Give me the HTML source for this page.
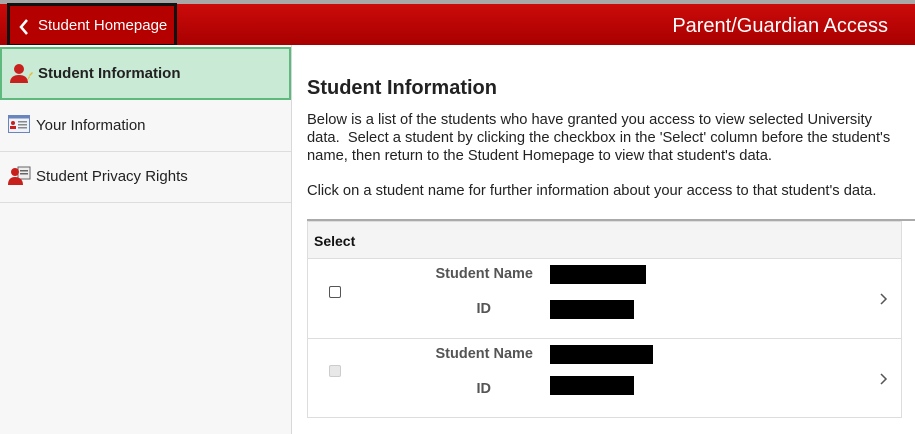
<!DOCTYPE html>
<html><head><meta charset="utf-8"><style>
*{box-sizing:border-box;margin:0;padding:0}
body{width:915px;height:434px;overflow:hidden;background:#fff;font-family:"Liberation Sans",Arial,sans-serif;position:relative}
.top{position:absolute;left:0;top:0;width:915px;height:4px;background:#a8a8a8}
.hdr{position:absolute;left:0;top:4px;width:915px;height:41px;background:linear-gradient(#cc0a0a,#a80000)}
.back{position:absolute;left:7px;top:3px;width:170px;height:44px;border:3px solid #111;background:#b50000;color:#fff;font-size:15px;line-height:40px;padding-left:28px}
.back svg{position:absolute;left:9px;top:13px}
.ttl{position:absolute;right:27px;top:10px;line-height:33px;color:#fff;font-size:20px}
.nav{position:absolute;left:0;top:45px;width:292px;height:389px;background:#f7f7f7;border-right:1px solid #d8d8d8}
.it{position:absolute;left:0;width:291px;height:51px;border-bottom:1px solid #ddd;font-size:15px;color:#222;padding-left:36px;line-height:50px}
.sel{background:#c9ebd6;border:2px solid #5db97c;font-weight:bold;padding-left:36px}
.it svg{position:absolute;left:8px;top:14px}
h1{position:absolute;left:307px;top:77px;font-size:20px;font-weight:bold;color:#222}
.p{position:absolute;left:307px;width:595px;font-size:14.7px;line-height:18px;color:#222}
.ln{position:absolute;left:307px;top:219px;width:608px;height:2px;background:#aaa}
.tb{position:absolute;left:307px;top:221px;width:595px;height:197px;border:1px solid #ddd}
.th{height:37px;background:#f4f4f4;border-bottom:1px solid #ddd;font-weight:bold;font-size:14px;line-height:38px;padding-left:6px;color:#111}
.row{position:relative;height:80px;border-bottom:1px solid #ddd}
.lb{position:absolute;font-weight:bold;font-size:14.5px;color:#555;text-align:right;width:120px}
.blk{position:absolute;background:#000;height:19px}
.cb{position:absolute;left:21px;width:12px;height:12px;border:1px solid #555;border-radius:2px}
.chev{position:absolute;left:572px}
</style></head><body>
<div class="top"></div>
<div class="hdr"></div>
<div class="back"><svg width="10" height="16" viewBox="0 0 10 16"><path d="M8 1L2 8l6 7" stroke="#fff" stroke-width="2.5" fill="none"/></svg>Student Homepage</div>
<div class="ttl">Parent/Guardian Access</div>
<div class="nav">
<div class="it sel" style="top:2px;height:53px;line-height:50px"><svg width="24" height="22" viewBox="0 0 24 22"><circle cx="9" cy="6" r="5" fill="#c8201d"/><path d="M0 20c0-6 4-8 9-8s9 2 9 8z" fill="#c8201d"/><path d="M19 12l3-3 1 1-3 3z M17 18l2-5 1 1z" fill="#e8b830"/></svg>Student Information</div>
<div class="it" style="top:56px"><svg width="22" height="18" viewBox="0 0 22 18"><rect x="0.5" y="0.5" width="21" height="17" fill="#eef2fa" stroke="#6a85bb"/><rect x="0.5" y="0.5" width="21" height="3" fill="#6a85bb"/><circle cx="5" cy="8" r="2" fill="#c8201d"/><rect x="2" y="11" width="6" height="3" fill="#c8201d"/><rect x="10" y="6" width="9" height="1.5" fill="#888"/><rect x="10" y="9" width="9" height="1.5" fill="#888"/><rect x="10" y="12" width="9" height="1.5" fill="#888"/></svg>Your Information</div>
<div class="it" style="top:107px"><svg width="24" height="20" viewBox="0 0 24 20"><rect x="10" y="1" width="12" height="12" fill="#eee" stroke="#666"/><rect x="12" y="4" width="8" height="1.5" fill="#666"/><rect x="12" y="7" width="8" height="1.5" fill="#666"/><circle cx="7" cy="6" r="4" fill="#c8201d"/><path d="M0 19c0-6 3-8 7-8s8 2 8 8z" fill="#c8201d"/></svg>Student Privacy Rights</div>
</div>
<h1>Student Information</h1>
<div class="p" style="top:111px">Below is a list of the students who have granted you access to view selected University data.&nbsp; Select a student by clicking the checkbox in the 'Select' column before the student's name, then return to the Student Homepage to view that student's data.</div>
<div class="p" style="top:182px">Click on a student name for further information about your access to that student's data.</div>
<div class="ln"></div>
<div class="tb">
<div class="th">Select</div>
<div class="row">
<div class="cb" style="top:27px"></div>
<div class="lb" style="left:105px;top:7px">Student Name</div>
<div class="blk" style="left:242px;top:6px;width:96px"></div>
<div class="lb" style="left:63px;top:42px">ID</div>
<div class="blk" style="left:242px;top:41px;width:84px"></div>
<svg class="chev" style="top:34px" width="8" height="12" viewBox="0 0 8 12"><path d="M1 1l5 5-5 5" stroke="#555" stroke-width="1.5" fill="none"/></svg>
</div>
<div class="row" style="border-bottom:none">
<div class="cb" style="top:26px;border-color:#ccc;background:#e8e8e8"></div>
<div class="lb" style="left:105px;top:7px">Student Name</div>
<div class="blk" style="left:242px;top:6px;width:103px"></div>
<div class="lb" style="left:63px;top:42px">ID</div>
<div class="blk" style="left:242px;top:37px;width:84px"></div>
<svg class="chev" style="top:34px" width="8" height="12" viewBox="0 0 8 12"><path d="M1 1l5 5-5 5" stroke="#555" stroke-width="1.5" fill="none"/></svg>
</div>
</div>
</body></html>
